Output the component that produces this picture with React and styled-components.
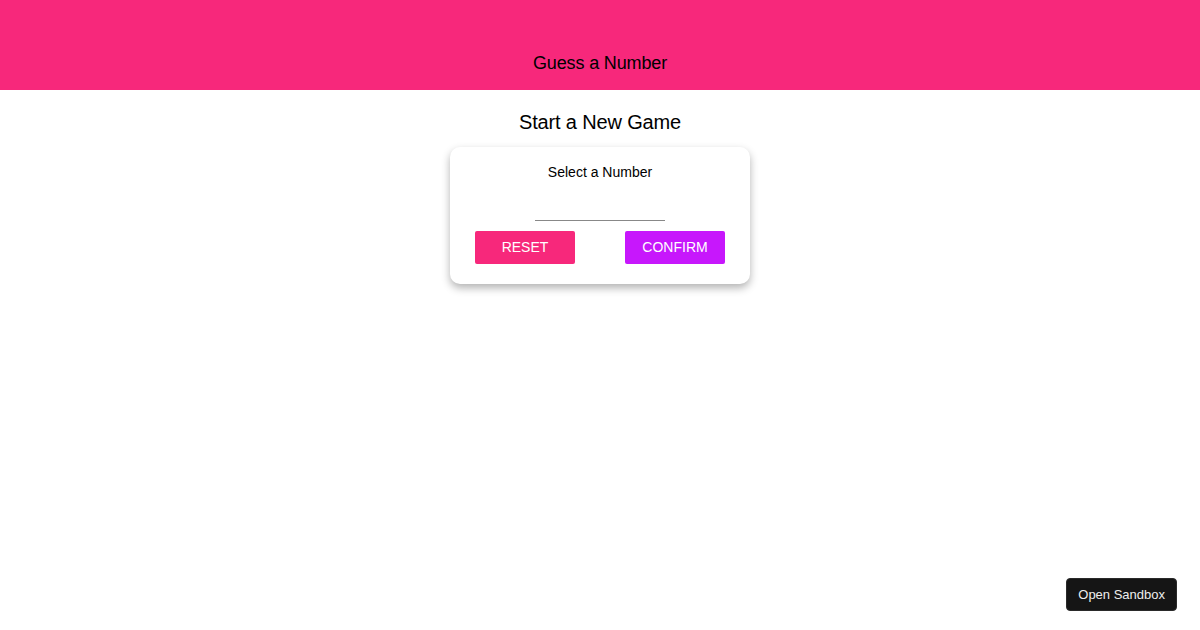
import React, { useState } from "react";
import styled, { createGlobalStyle } from "styled-components";

const GlobalStyle = createGlobalStyle`
  html, body {
    margin: 0;
    padding: 0;
    background: #fff;
    font-family: "Liberation Sans", Arial, sans-serif;
  }
`;

const Page = styled.div`
  display: flex;
  flex-direction: column;
  min-height: 630px;
`;

const Header = styled.header`
  height: 90px;
  box-sizing: border-box;
  padding-top: 36px;
  background: #f7287b;
  display: flex;
  align-items: center;
  justify-content: center;
  h1 {
    margin: 0;
    font-size: 18px;
    font-weight: 400;
    letter-spacing: -0.15px;
    color: #000;
  }
`;

const Screen = styled.main`
  padding: 10px;
  display: flex;
  flex-direction: column;
  align-items: center;
`;

const Title = styled.h2`
  margin: 11px 0 13px;
  font-size: 20px;
  line-height: 23px;
  font-weight: 400;
  letter-spacing: -0.15px;
  color: #000;
`;

const Card = styled.div`
  width: 300px;
  box-sizing: border-box;
  padding: 17px 20px 20px;
  background: #fff;
  border-radius: 10px;
  box-shadow: 0 4px 8px rgba(0, 0, 0, 0.3);
  display: flex;
  flex-direction: column;
  align-items: center;
`;

const Label = styled.div`
  font-size: 14px;
  line-height: 16px;
  color: #000;
`;

const NumberInput = styled.input`
  width: 130px;
  height: 28px;
  box-sizing: border-box;
  margin: 13px 0 10px;
  border: none;
  border-bottom: 1px solid #888;
  outline: none;
  text-align: center;
  font-family: inherit;
  font-size: 14px;
  background: transparent;
`;

const ButtonRow = styled.div`
  width: 100%;
  box-sizing: border-box;
  padding: 0 5px;
  display: flex;
  justify-content: space-between;
`;

const ActionButton = styled.button`
  width: 100px;
  height: 33px;
  border: none;
  border-radius: 2px;
  background: ${(p) => p.color};
  color: #fff;
  font-family: inherit;
  font-size: 14px;
  font-weight: 500;
  text-transform: uppercase;
  cursor: pointer;
  padding: 0 0 2px;
`;

const SandboxButton = styled.button`
  position: fixed;
  right: 23px;
  bottom: 19px;
  height: 33px;
  padding: 0 11px;
  border: 1px solid #2a2a2a;
  border-radius: 4px;
  background: #151515;
  color: #eee;
  font-family: "Liberation Sans", Arial, sans-serif;
  font-size: 13px;
  cursor: pointer;
`;

const App = () => {
  const [value, setValue] = useState("");
  return (
    <Page>
      <GlobalStyle />
      <Header>
        <h1>Guess a Number</h1>
      </Header>
      <Screen>
        <Title>Start a New Game</Title>
        <Card>
          <Label>Select a Number</Label>
          <NumberInput
            value={value}
            maxLength={2}
            onChange={(e) => setValue(e.target.value.replace(/[^0-9]/g, ""))}
          />
          <ButtonRow>
            <ActionButton color="#f7287b" onClick={() => setValue("")}>
              Reset
            </ActionButton>
            <ActionButton color="#c717fc">Confirm</ActionButton>
          </ButtonRow>
        </Card>
      </Screen>
      <SandboxButton>Open Sandbox</SandboxButton>
    </Page>
  );
};

export default App;
